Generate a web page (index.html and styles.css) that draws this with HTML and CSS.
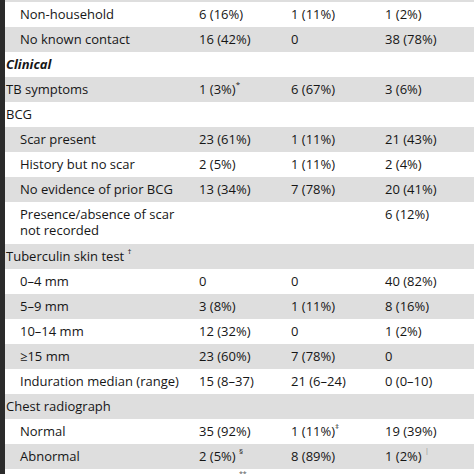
FILE: index.html
```html
<!DOCTYPE html>
<html>
<head>
<meta charset="utf-8">
<link rel="stylesheet" href="styles.css">
</head>
<body>
<div class="page">
  <div class="topstrip"></div>
  <table class="tbl">
    <colgroup>
      <col class="c1"><col class="c2"><col class="c3"><col class="c4">
    </colgroup>
    <tbody>
      <tr><td class="sub">Non-household</td><td>6 (16%)</td><td>1 (11%)</td><td>1 (2%)</td></tr>
      <tr class="g"><td class="sub">No known contact</td><td>16 (42%)</td><td>0</td><td>38 (78%)</td></tr>
      <tr><td class="sec">Clinical</td><td></td><td></td><td></td></tr>
      <tr class="g"><td>TB symptoms</td><td>1 (3%)<sup class="sym">*</sup></td><td>6 (67%)</td><td>3 (6%)</td></tr>
      <tr><td>BCG</td><td></td><td></td><td></td></tr>
      <tr class="g"><td class="sub">Scar present</td><td>23 (61%)</td><td>1 (11%)</td><td>21 (43%)</td></tr>
      <tr><td class="sub">History but no scar</td><td>2 (5%)</td><td>1 (11%)</td><td>2 (4%)</td></tr>
      <tr class="g"><td class="sub">No evidence of prior BCG</td><td>13 (34%)</td><td>7 (78%)</td><td>20 (41%)</td></tr>
      <tr class="tall"><td class="sub">Presence/absence of scar not recorded</td><td></td><td></td><td>6 (12%)</td></tr>
      <tr class="g"><td>Tuberculin skin test <sup class="sym">†</sup></td><td></td><td></td><td></td></tr>
      <tr><td class="sub">0–4 mm</td><td>0</td><td>0</td><td>40 (82%)</td></tr>
      <tr class="g"><td class="sub">5–9 mm</td><td>3 (8%)</td><td>1 (11%)</td><td>8 (16%)</td></tr>
      <tr><td class="sub">10–14 mm</td><td>12 (32%)</td><td>0</td><td>1 (2%)</td></tr>
      <tr class="g"><td class="sub">≥15 mm</td><td>23 (60%)</td><td>7 (78%)</td><td>0</td></tr>
      <tr><td class="sub">Induration median (range)</td><td>15 (8–37)</td><td>21 (6–24)</td><td>0 (0–10)</td></tr>
      <tr class="g"><td>Chest radiograph</td><td></td><td></td><td></td></tr>
      <tr><td class="sub">Normal</td><td>35 (92%)</td><td>1 (11%)<sup class="sym">‡</sup></td><td>19 (39%)</td></tr>
      <tr class="g"><td class="sub">Abnormal</td><td>2 (5%) <sup class="sym">§</sup></td><td>8 (89%)</td><td>1 (2%) <sup class="sym light">|</sup></td></tr>
      <tr class="last"><td></td><td class="note"><span class="mark">**</span></td><td></td><td></td></tr>
    </tbody>
  </table>
</div>
</body>
</html>
```
FILE: styles.css
```css
html, body {
  margin: 0;
  padding: 0;
  background: #ffffff;
  overflow: hidden;
}
.page {
  width: 474px;
  height: 474px;
  border-left: 5px solid #2b2b2b;
  box-sizing: border-box;
  overflow: hidden;
  font-family: "Open Sans", "DejaVu Sans", sans-serif;
  font-size: 13px;
  color: #161616;
}
.topstrip {
  height: 2px;
  background: #dedede;
}
.tbl {
  border-collapse: collapse;
  table-layout: fixed;
  width: 469px;
}
.c1 { width: 194px; }
.c2 { width: 92px; }
.c3 { width: 94px; }
.c4 { width: 89px; }
.tbl td {
  height: 24px;
  padding: 0 0 1px 0;
  vertical-align: middle;
  line-height: 16px;
  white-space: nowrap;
}
.tbl td:first-child {
  padding-left: 1px;
}
.tbl td.sub {
  padding-left: 15px;
}
.tbl tr.g td {
  background: #dedede;
}
.tbl tr.tall td {
  height: 38px;
  vertical-align: top;
  padding: 4px 0 0 0;
  white-space: normal;
}
.tbl tr.tall td.sub {
  padding-left: 15px;
  padding-right: 20px;
}
.tbl tr.last td {
  height: 6px;
  vertical-align: top;
  padding: 0;
  line-height: 5px;
}
.tbl tr.last td.note {
  padding-left: 40px;
}
.mark {
  font-size: 7px;
  line-height: 5px;
  color: #555;
}
.sec {
  font-weight: bold;
  font-style: italic;
}
.sym {
  font-size: 8px;
  vertical-align: top;
  line-height: 8px;
  position: relative;
  top: -1px;
}
.light {
  color: #888;
  font-size: 7px;
}
```
